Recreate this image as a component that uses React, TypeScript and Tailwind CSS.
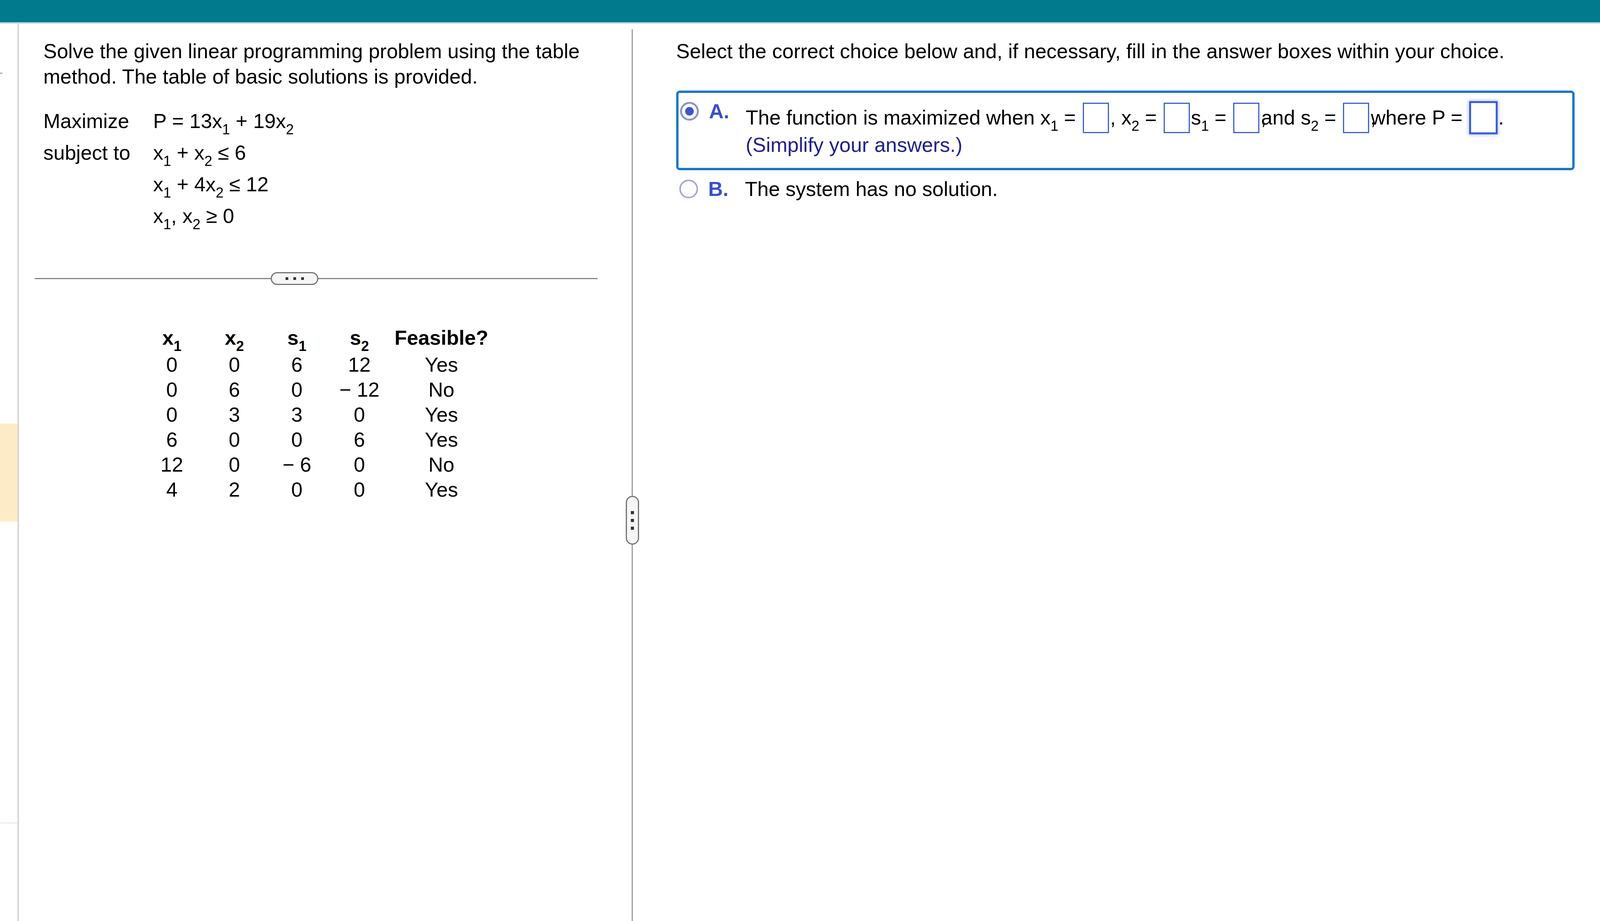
import React from "react";

const Sub = ({ children }: { children: React.ReactNode }) => (
  <span className="relative top-[16px] text-[36px] leading-none">{children}</span>
);

const Radio = ({ selected }: { selected?: boolean }) =>
  selected ? (
    <span className="w-[48px] h-[48px] shrink-0 rounded-full border-[5px] border-[#8e93cf] bg-white flex items-center justify-center">
      <span className="block w-[22px] h-[22px] rounded-full bg-[#3a55d0]" />
    </span>
  ) : (
    <span className="block w-[48px] h-[48px] shrink-0 rounded-full border-[4px] border-[#a1a5e0] bg-white" />
  );

const Box = () => (
  <span className="inline-block w-[67px] h-[78px] border-[3px] border-[#3f5fd3] bg-white align-[-22px] mx-[3px]" />
);

const FocusBox = () => (
  <span className="inline-block w-[73px] h-[85px] border-[5px] border-[#3a60d8] bg-white align-[-25px] mx-[2px] shadow-[0_0_8px_2px_rgba(130,150,235,0.55)]" />
);

const rows: string[][] = [
  ["0", "0", "6", "12", "Yes"],
  ["0", "6", "0", "\u2212 12", "No"],
  ["0", "3", "3", "0", "Yes"],
  ["6", "0", "0", "6", "Yes"],
  ["12", "0", "\u2212 6", "0", "No"],
  ["4", "2", "0", "0", "Yes"],
];

export default function App() {
  return (
    <div className="w-full h-[2359px] bg-white flex flex-col text-[52px] text-black font-['Liberation_Sans',Arial,Helvetica,sans-serif] overflow-hidden">
      <div className="h-[57px] shrink-0 bg-[#017a8e]" />
      <div className="h-[4px] shrink-0 bg-[#b6dfe7]" />
      <div className="flex flex-1 min-h-0">
        {/* left strip */}
        <div className="w-[45px] shrink-0 flex flex-col">
          <div className="mt-[125px] h-[3px] w-[6px] bg-[#a8a8a8]" />
          <div className="mt-[896px] h-[251px] w-full bg-[#fdebc8]" />
          <div className="mt-[771px] h-[2px] w-full bg-[#e4e4e4]" />
        </div>
        <div className="w-[3px] shrink-0 bg-[#cbcbcb]" />

        {/* left panel */}
        <div className="w-[1569px] shrink-0 flex flex-col">
          <p className="pl-[63px] pt-[38px] leading-[65px] whitespace-nowrap">
            Solve the given linear programming problem using the table
            <br />
            method. The table of basic solutions is provided.
          </p>

          <div className="pl-[63px] mt-[41px] leading-[81px] whitespace-nowrap">
            <div className="flex h-[81px]">
              <span className="w-[281px] shrink-0">Maximize</span>
              <span>
                P = 13x<Sub>1</Sub> + 19x<Sub>2</Sub>
              </span>
            </div>
            <div className="flex h-[81px]">
              <span className="w-[281px] shrink-0">subject to</span>
              <span>
                x<Sub>1</Sub> + x<Sub>2</Sub> {"\u2264"} 6
              </span>
            </div>
            <div className="flex h-[81px]">
              <span className="w-[281px] shrink-0" />
              <span>
                x<Sub>1</Sub> + 4x<Sub>2</Sub> {"\u2264"} 12
              </span>
            </div>
            <div className="flex h-[81px]">
              <span className="w-[281px] shrink-0" />
              <span>
                x<Sub>1</Sub>, x<Sub>2</Sub> {"\u2265"} 0
              </span>
            </div>
          </div>

          {/* horizontal divider */}
          <div className="ml-[41px] mt-[103px] w-[1441px] h-[33px] flex items-center">
            <div className="w-[604px] h-[3px] bg-[#858585]" />
            <div className="w-[122px] h-[33px] shrink-0 rounded-full border-[3px] border-[#757575] bg-[#f6f6f6] flex items-center justify-center gap-[13px]">
              <span className="block w-[7px] h-[7px] bg-[#333]" />
              <span className="block w-[7px] h-[7px] bg-[#333]" />
              <span className="block w-[7px] h-[7px] bg-[#333]" />
            </div>
            <div className="flex-1 h-[3px] bg-[#858585]" />
          </div>

          {/* table */}
          <div className="ml-[312px] mt-[98px] grid grid-cols-[160px_160px_160px_160px_260px] text-center whitespace-nowrap">
            <div className="h-[74px] leading-[74px] font-bold">
              x<Sub>1</Sub>
            </div>
            <div className="h-[74px] leading-[74px] font-bold">
              x<Sub>2</Sub>
            </div>
            <div className="h-[74px] leading-[74px] font-bold">
              s<Sub>1</Sub>
            </div>
            <div className="h-[74px] leading-[74px] font-bold">
              s<Sub>2</Sub>
            </div>
            <div className="h-[74px] leading-[74px] font-bold">Feasible?</div>
            {rows.map((r, i) =>
              r.map((c, j) => (
                <div key={`${i}-${j}`} className="h-[64px] leading-[64px]">
                  {c}
                </div>
              ))
            )}
          </div>
        </div>

        {/* vertical divider */}
        <div className="relative w-[3px] shrink-0 flex flex-col pt-[14px]">
          <div className="flex-1 bg-[#9c9c9c]" />
          <div className="absolute left-[-15px] top-[1209px] w-[34px] h-[125px] rounded-full border-[3px] border-[#737373] bg-[#f6f6f6] flex flex-col items-center justify-center gap-[12px]">
            <span className="block w-[8px] h-[8px] bg-[#333]" />
            <span className="block w-[8px] h-[8px] bg-[#333]" />
            <span className="block w-[8px] h-[8px] bg-[#333]" />
          </div>
        </div>

        {/* right panel */}
        <div className="flex-1 min-w-0 flex flex-col pl-[111px] pr-[65px]">
          <p className="pt-[38px] leading-[65px] whitespace-nowrap">
            Select the correct choice below and, if necessary, fill in the answer boxes within your choice.
          </p>

          <div className="mt-[68px] border-[6px] border-[#1778c9] rounded-[9px] flex items-start bg-white">
            <div className="flex items-center h-[48px] mt-[23px] ml-[4px]">
              <Radio selected />
              <span className="ml-[26px] w-[94px] leading-[48px] font-bold text-[#3850c8]">A.</span>
            </div>
            <div className="pt-[21px] pb-[26px] whitespace-nowrap">
              <div className="h-[80px] leading-[80px]">
                The function is maximized when x<Sub>1</Sub> = <Box />, x<Sub>2</Sub> = <Box />s<Sub>1</Sub> = <Box />
                <span>,</span>
                <span className="ml-[-13px]">and</span> s<Sub>2</Sub> = <Box />
                <span>,</span>
                <span className="ml-[-13px]">where</span> P = <FocusBox />.
              </div>
              <div className="leading-[65px] text-[#20208c]">(Simplify your answers.)</div>
            </div>
          </div>

          <div className="mt-[16px] flex items-center h-[64px]">
            <span className="block ml-[8px]">
              <Radio />
            </span>
            <span className="ml-[26px] w-[94px] leading-[64px] font-bold text-[#3850c8]">B.</span>
            <span className="leading-[64px] whitespace-nowrap">The system has no solution.</span>
          </div>
        </div>
      </div>
    </div>
  );
}
